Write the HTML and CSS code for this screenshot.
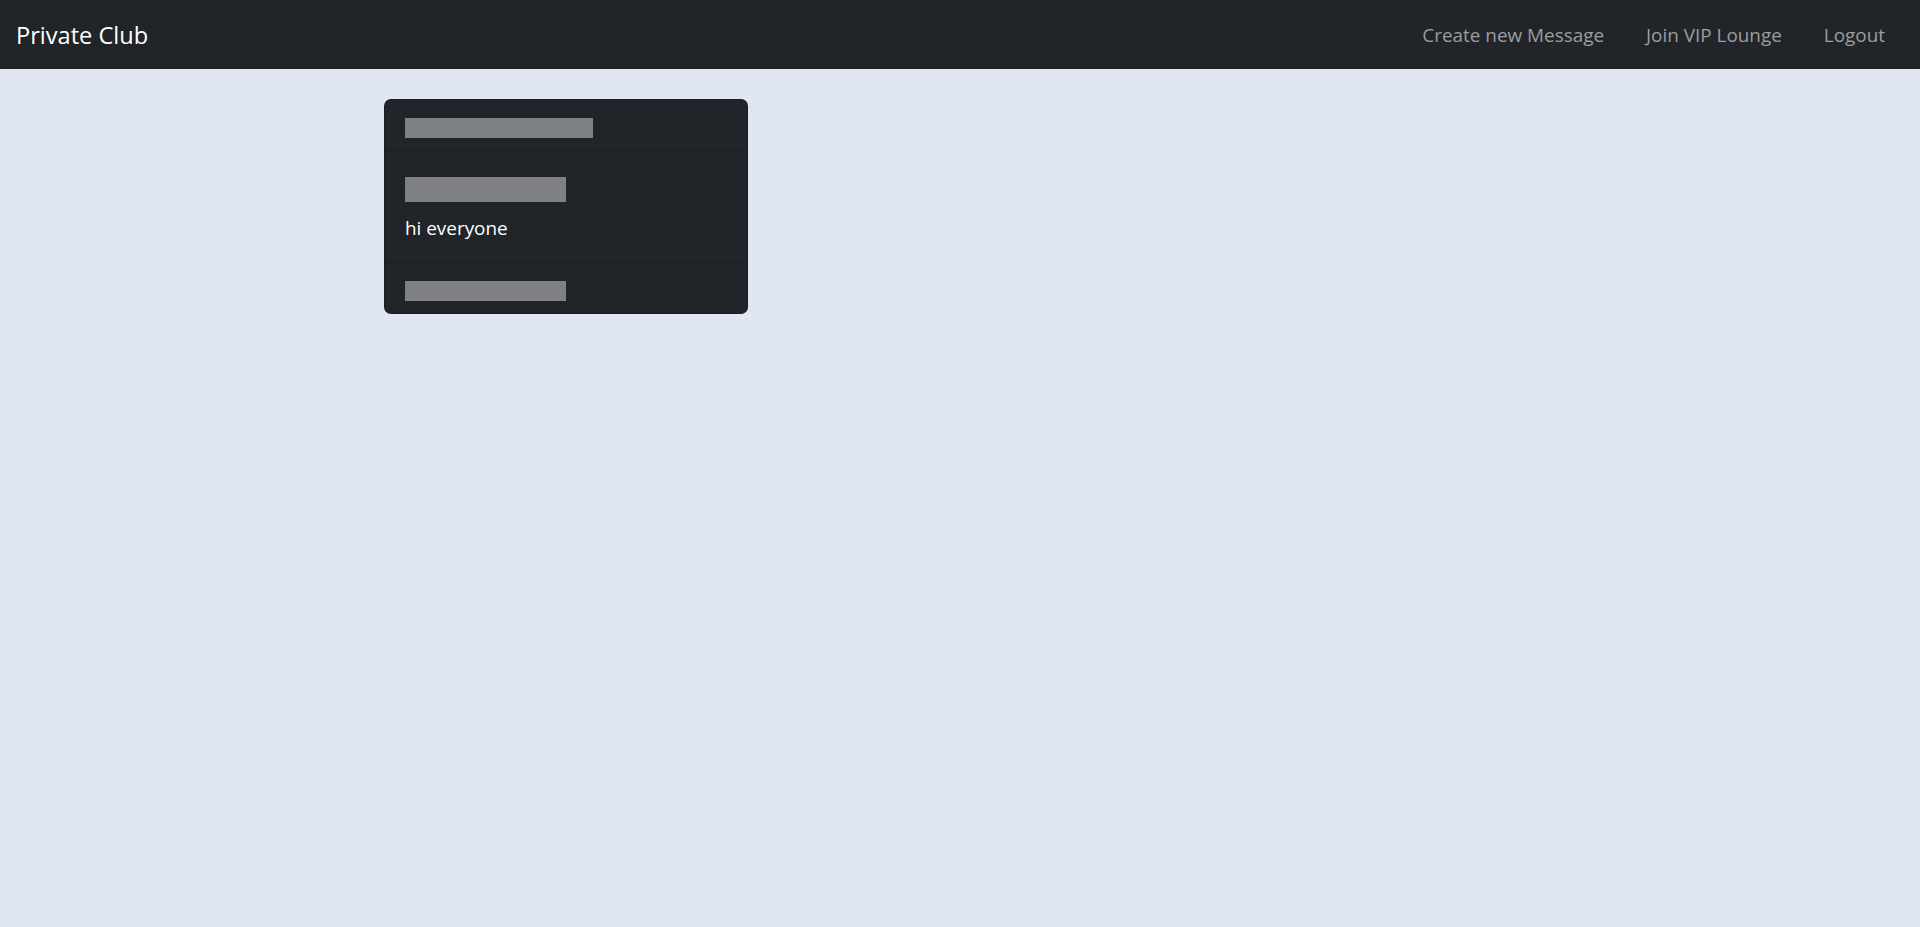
FILE: index.html
```html
<!DOCTYPE html>
<html lang="en">
<head>
<meta charset="utf-8">
<title>Private Club</title>
<link rel="stylesheet" href="styles.css">
</head>
<body>
<nav class="navbar">
  <a class="brand" href="#">Private Club</a>
  <ul class="nav-links">
    <li><a class="nav-link" href="#">Create new Message</a></li>
    <li><a class="nav-link" href="#">Join VIP Lounge</a></li>
    <li><a class="nav-link" href="#">Logout</a></li>
  </ul>
</nav>
<main class="content">
  <div class="card">
    <div class="card-header"><span class="redact redact-wide"></span></div>
    <div class="card-body">
      <h5 class="card-title"><span class="redact redact-title"></span></h5>
      <p class="card-text">hi everyone</p>
    </div>
    <div class="card-footer"><span class="redact redact-narrow"></span></div>
  </div>
</main>
</body>
</html>
```
FILE: styles.css
```css
* { box-sizing: border-box; }
html, body { margin: 0; padding: 0; }
body {
  background: #e0e7f0;
  font-family: "Open Sans", "Noto Sans", sans-serif;
  font-size: 19px;
  line-height: 30px;
  color: #fff;
  min-height: 927px;
}
.navbar {
  display: flex;
  align-items: center;
  justify-content: space-between;
  height: 69px;
  background: #212529;
  padding: 0 14px 0 16px;
}
.brand {
  color: #fff;
  text-decoration: none;
  font-size: 23.6px;
  line-height: 36px;
}
.nav-links {
  list-style: none;
  display: flex;
  margin: 0;
  padding: 0;
}
.nav-link {
  display: block;
  padding: 10px 21px;
  color: #9b9d9f;
  text-decoration: none;
  font-size: 18.9px;
  line-height: 30px;
}
.nav-link-join {
  letter-spacing: 0.2px;
}
.content {
  padding: 30px 0 0 384px;
}
.card {
  width: 364px;
  background: #212529;
  border-radius: 7px;
  border: 1px solid rgba(0,0,0,0.175);
  overflow: hidden;
}
.card-header {
  padding: 18px 20px 12px;
  border-bottom: 1px solid rgba(0,0,0,0.2);
}
.card-body {
  padding: 26px 20px 19.5px;
}
.card-title {
  margin: 0 0 10.5px;
}
.card-text {
  margin: 0;
  color: #fff;
  font-size: 18.9px;
  line-height: 30px;
}
.card-footer {
  padding: 18px 20px 12px;
  border-top: 1px solid rgba(0,0,0,0.2);
}
.redact {
  display: block;
  background: #7f8083;
  height: 20px;
}
.redact-wide { width: 188px; }
.redact-title { width: 161px; height: 25px; }
.redact-narrow { width: 161px; }
```
